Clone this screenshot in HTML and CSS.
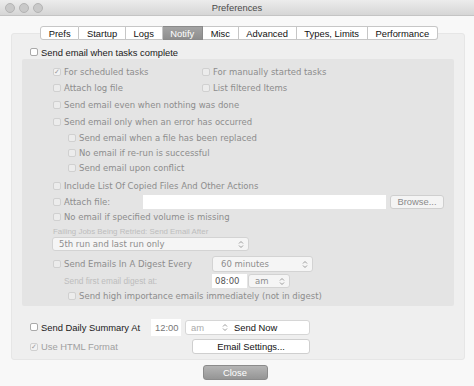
FILE: index.html
```html
<!DOCTYPE html>
<html>
  <head>
    <title>Preferences</title>
    <link rel="stylesheet" href="styles.css">
  </head>
  <body>
    <div class="window">
      <div class="titlebar">
        <div class="lights"><span></span><span></span><span></span></div>
        <div class="title">Preferences</div>
      </div>

      <div class="tabs">
        <div class="tab">Prefs</div>
        <div class="tab">Startup</div>
        <div class="tab">Logs</div>
        <div class="tab selected">Notify</div>
        <div class="tab">Misc</div>
        <div class="tab">Advanced</div>
        <div class="tab">Types, Limits</div>
        <div class="tab">Performance</div>
      </div>

      <div class="box">
        <label class="outer-row top-row"><span class="cb"></span>Send email when tasks complete</label>

        <div class="panel">
          <div class="row r1">
            <span class="item w-left"><span class="cb off checked">&#10003;</span>For scheduled tasks</span>
            <span class="item"><span class="cb off"></span>For manually started tasks</span>
          </div>
          <div class="row r2">
            <span class="item w-left"><span class="cb off"></span>Attach log file</span>
            <span class="item"><span class="cb off"></span>List filtered Items</span>
          </div>
          <div class="row r3"><span class="cb off"></span>Send email even when nothing was done</div>
          <div class="row r4"><span class="cb off"></span>Send email only when an error has occurred</div>
          <div class="row sub r5"><span class="cb off"></span>Send email when a file has been replaced</div>
          <div class="row sub r6"><span class="cb off"></span>No email if re-run is successful</div>
          <div class="row sub r7"><span class="cb off"></span>Send email upon conflict</div>
          <div class="row r8"><span class="cb off"></span>Include List Of Copied Files And Other Actions</div>
          <div class="row r9">
            <span class="item w-attach"><span class="cb off"></span>Attach file:</span>
            <span class="field wide"></span>
            <span class="button browse">Browse...</span>
          </div>
          <div class="row r10"><span class="cb off"></span>No email if specified volume is missing</div>
          <div class="row small-label r11">Failing Jobs Being Retried: Send Email After</div>
          <div class="row r12">
            <span class="popup runs">5th run and last run only<svg class="chev" viewBox="0 0 6 9"><path d="M1 3.5 L3 1.5 L5 3.5 M1 5.5 L3 7.5 L5 5.5" /></svg></span>
          </div>
          <div class="row r13">
            <span class="item w-digest"><span class="cb off"></span>Send Emails In A Digest Every</span>
            <span class="popup minutes">60 minutes<svg class="chev" viewBox="0 0 6 9"><path d="M1 3.5 L3 1.5 L5 3.5 M1 5.5 L3 7.5 L5 5.5" /></svg></span>
          </div>
          <div class="row r14">
            <span class="small-label w-first">Send first email digest at:</span>
            <span class="field time">08:00</span>
            <span class="popup ampm">am<svg class="chev" viewBox="0 0 6 9"><path d="M1 3.5 L3 1.5 L5 3.5 M1 5.5 L3 7.5 L5 5.5" /></svg></span>
          </div>
          <div class="row sub r15"><span class="cb off"></span>Send high importance emails immediately (not in digest)</div>
        </div>

        <div class="outer-row daily">
          <label class="daily-label"><span class="cb"></span>Send Daily Summary At</label>
          <span class="field clock">12:00</span>
          <span class="combo">
            <span class="combo-am">am<svg class="chev" viewBox="0 0 6 9"><path d="M1 3.5 L3 1.5 L5 3.5 M1 5.5 L3 7.5 L5 5.5" /></svg></span>
            <span class="combo-btn">Send Now</span>
          </span>
        </div>

        <div class="outer-row html-row">
          <label class="html-label"><span class="cb off checked">&#10003;</span>Use HTML Format</label>
          <span class="button settings">Email Settings...</span>
        </div>
      </div>

      <div class="footer">
        <span class="close-btn">Close</span>
      </div>
    </div>
  </body>
</html>
```

FILE: styles.css
```css
:root {
  --ui-font: "Liberation Sans", Arial, sans-serif;
  --grande: "DejaVu Sans", "Noto Sans", sans-serif;
  --disabled-text: #8d8d8d;
}

body {
  margin: 0;
  background: #f8f8f8;
  font-family: var(--ui-font);
  font-size: 9.4px;
  color: #1a1a1a;
}

.window {
  width: 474px;
  height: 386px;
  display: flex;
  flex-direction: column;
  overflow: hidden;
}

/* Title bar */
.titlebar {
  height: 15px;
  flex: none;
  display: flex;
  align-items: center;
  background: linear-gradient(#ececec, #d6d6d6);
  border-bottom: 1px solid #c4c4c4;
  position: relative;
}

.lights {
  display: flex;
  gap: 4px;
  padding-left: 5px;
}

.lights span {
  width: 8px;
  height: 8px;
  border-radius: 50%;
  background: #c9c9c9;
  border: 0.5px solid #b4b4b4;
}

.title {
  position: absolute;
  left: 0;
  right: 0;
  text-align: center;
  color: #4a4a4a;
  font-size: 9.4px;
}

/* Tabs */
.tabs {
  display: flex;
  margin: 10px 0 -7px 40px;
  height: 14px;
  position: relative;
  z-index: 2;
}

.tab {
  display: flex;
  align-items: center;
  justify-content: center;
  padding: 0 7.7px;
  background: #fff;
  border: 1px solid #c6c6c6;
  border-left: none;
  color: #111;
}

.tab:first-child {
  border-left: 1px solid #c6c6c6;
  border-radius: 3px 0 0 3px;
}

.tab:last-child {
  border-radius: 0 3px 3px 0;
}

.tab.selected {
  background: linear-gradient(#a3a3a3, #8e8e8e);
  border-color: #8a8a8a;
  color: #fff;
}

/* Main group box */
.box {
  margin: 0 9px 0 11px;
  height: 327px;
  background: #efefef;
  border: 1px solid #e6e6e6;
  border-radius: 3px;
  display: flex;
  flex-direction: column;
  box-sizing: border-box;
}

.outer-row {
  display: flex;
  align-items: center;
  padding-left: 18px;
}

.top-row {
  margin-top: 11px;
  height: 14px;
}

.cb {
  width: 8px;
  height: 8px;
  flex: none;
  box-sizing: border-box;
  border: 1px solid #a9a9a9;
  border-radius: 2px;
  background: #fff;
  margin-right: 3px;
  display: inline-flex;
  align-items: center;
  justify-content: center;
  font-size: 7px;
  line-height: 1;
  color: #9a9a9a;
}

.cb.off {
  border-color: #d0d0d0;
  background: #ececec;
}

.cb.checked {
  background: #f2f2f2;
}

/* Disabled inner panel */
.panel {
  margin: 0 10px 0 10px;
  height: 247px;
  background: #e4e4e4;
  border-radius: 2px;
  padding-top: 5px;
  box-sizing: border-box;
  font-family: var(--grande);
  font-size: 8.5px;
  color: var(--disabled-text);
}

.row {
  display: flex;
  align-items: center;
  height: 16px;
  padding-left: 31px;
}

.row.sub {
  padding-left: 46px;
  height: 15px;
}

.item {
  display: flex;
  align-items: center;
}

.w-left { width: 149px; }
.w-attach { width: 90px; }
.w-digest { width: 159px; }
.w-first { width: 148px; }

.r3, .r4 { margin-top: 1px; }
.r8 { margin-top: 3px; }
.r9, .r10 { height: 15px; }
.r11 { margin-top: 2px; height: 10px; }
.r12 { margin-top: 1px; height: 14px; padding-left: 30px; }
.r13 { margin-top: 5px; }
.r14 { margin-top: 2px; height: 14px; padding-left: 42px; }
.r15 { height: 14px; }

.small-label {
  font-family: var(--ui-font);
  font-size: 7.9px;
  color: #bdbdbd;
}

.r14 .small-label {
  font-size: 8.3px;
}

.field {
  background: #fff;
  height: 14px;
  display: inline-flex;
  align-items: center;
  box-sizing: border-box;
}

.field.wide {
  width: 243px;
}

.field.time {
  width: 35px;
  padding-left: 3px;
  color: #555;
}

.button {
  display: inline-flex;
  align-items: center;
  justify-content: center;
  background: #fff;
  border: 1px solid #cfcfcf;
  border-radius: 3px;
  box-sizing: border-box;
  height: 14px;
  font-family: var(--ui-font);
  font-size: 9.4px;
}

.browse {
  width: 54px;
  margin-left: 4px;
  background: #f4f4f4;
  color: #8a8a8a;
}

.popup {
  display: inline-flex;
  align-items: center;
  justify-content: space-between;
  background: #f5f5f5;
  border: 1px solid #d3d3d3;
  border-radius: 3px;
  box-sizing: border-box;
  height: 14px;
  padding: 0 4px 0 6px;
  color: var(--disabled-text);
}

.runs { width: 197px; }
.minutes { width: 101px; height: 16px; padding-left: 8px; }
.ampm { width: 42px; margin-left: 1px; padding-left: 6px; }

.chev {
  width: 6px;
  height: 9px;
  flex: none;
}

.chev path {
  fill: none;
  stroke: #9a9a9a;
  stroke-width: 1;
}

/* Bottom controls */
.daily {
  margin-top: 12px;
  height: 18px;
}

.daily-label {
  display: flex;
  align-items: center;
  width: 121px;
}

.clock {
  width: 30px;
  height: 17px;
  padding-left: 4px;
  color: #777;
}

.combo {
  display: flex;
  align-items: center;
  margin-left: 4px;
  width: 125px;
  height: 15px;
  background: #fff;
  border: 1px solid #d6d6d6;
  border-radius: 3px;
  box-sizing: border-box;
}

.combo-am {
  display: flex;
  align-items: center;
  justify-content: space-between;
  width: 37px;
  padding-left: 5px;
  color: #aaa;
}

.combo-btn {
  padding-left: 6px;
  color: #111;
}

.html-row {
  margin-top: 3px;
  height: 15px;
}

.html-label {
  display: flex;
  align-items: center;
  width: 162px;
  color: #a0a0a0;
}

.settings {
  width: 118px;
  height: 15px;
  color: #111;
}

/* Footer */
.footer {
  display: flex;
  justify-content: center;
  padding-top: 5px;
  padding-right: 4px;
}

.close-btn {
  width: 65px;
  height: 15px;
  display: flex;
  align-items: center;
  justify-content: center;
  background: linear-gradient(#b5b5b5, #959595);
  border: 1px solid #8b8b8b;
  border-radius: 3px;
  box-sizing: border-box;
  color: #fff;
}
```
